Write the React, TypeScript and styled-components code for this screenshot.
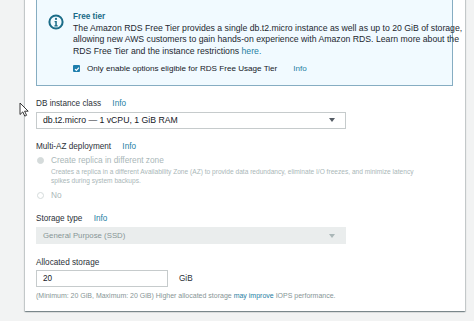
import React from 'react';
import styled, { createGlobalStyle } from 'styled-components';

const GlobalStyle = createGlobalStyle`
  html, body {
    margin: 0;
    padding: 0;
    background: #f2f3f3;
  }
  body {
    font-family: "Liberation Sans", Arial, sans-serif;
    color: #16191f;
    overflow: hidden;
  }
`;

const Page = styled.div`
  position: relative;
  width: 474px;
  height: 321px;
  overflow: hidden;
  padding: 0 9px 0 25px;
  box-sizing: border-box;
`;

const Card = styled.section`
  margin-top: -10px;
  background: #fff;
  box-shadow: 0 1px 1px rgba(0, 28, 36, 0.3), 1px 1px 1px rgba(0, 28, 36, 0.15),
    -1px 1px 1px rgba(0, 28, 36, 0.15);
  padding: 6px 12px 11px 11px;
`;

const InfoBox = styled.div`
  display: flex;
  gap: 9px;
  background: #f1faff;
  border: 1px solid #86adc2;
  padding: 14px 12px 10px 11px;
`;

const InfoIcon = styled.svg`
  flex: none;
  margin-top: 3px;
  width: 16px;
  height: 16px;
`;

const BoxContent = styled.div`
  flex: 1;
`;

const BoxTitle = styled.div`
  font-size: 8.2px;
  line-height: 11.5px;
  font-weight: bold;
  color: #1b6c88;
`;

const BoxText = styled.p`
  margin: 0;
  font-size: 8.7px;
  line-height: 11.5px;
  white-space: nowrap;
  color: #232830;
`;

const Link = styled.a`
  color: #2580a3;
  text-decoration: none;
`;

const CheckRow = styled.label`
  display: flex;
  align-items: center;
  gap: 7px;
  margin-top: 6px;
  font-size: 8.1px;
  line-height: 11.5px;
`;

const CheckBox = styled.span`
  width: 7px;
  height: 7px;
  border-radius: 1px;
  background: #1d7ead;
  display: flex;
  align-items: center;
  justify-content: center;
`;

const InfoLink = styled(Link)`
  margin-left: 9px;
`;

const Field = styled.div<{ $gap?: number }>`
  margin-top: ${(p) => p.$gap ?? 12.5}px;
`;

const Label = styled.div<{ $below?: number }>`
  font-size: 8.2px;
  line-height: 11px;
  color: #2b3038;
  margin-bottom: ${(p) => p.$below ?? 2.5}px;
`;

const Select = styled.div<{ $disabled?: boolean }>`
  width: 310px;
  height: 17px;
  box-sizing: border-box;
  display: flex;
  align-items: center;
  justify-content: space-between;
  padding: 0 10px 0 6px;
  font-size: ${(p) => (p.$disabled ? 7.8 : 8.7)}px;
  color: ${(p) => (p.$disabled ? '#879596' : '#16191f')};
  background: ${(p) => (p.$disabled ? '#eaeded' : '#fff')};
  border: 1px solid ${(p) => (p.$disabled ? '#eaeded' : '#c6cbcc')};
`;

const Caret = styled.span<{ $disabled?: boolean }>`
  width: 0;
  height: 0;
  border-left: 3px solid transparent;
  border-right: 3px solid transparent;
  border-top: 4px solid ${(p) => (p.$disabled ? '#aab7b8' : '#545b64')};
`;

const RadioRow = styled.div<{ $gap: number }>`
  display: flex;
  align-items: center;
  gap: 7px;
  margin-top: ${(p) => p.$gap}px;
  padding-left: 1px;
  font-size: 8.3px;
  line-height: 11px;
  color: #aab7b8;
`;

const Radio = styled.span<{ $checked?: boolean }>`
  width: 7px;
  height: 7px;
  border-radius: 50%;
  box-sizing: border-box;
  border: 1.5px solid #d5dbdb;
  background: ${(p) => (p.$checked ? '#d5dbdb' : '#fff')};
`;

const RadioDesc = styled.div`
  margin: 1px 0 0 15px;
  font-size: 6.6px;
  line-height: 9px;
  color: #aab7b8;
  white-space: nowrap;
`;

const InputRow = styled.div`
  display: flex;
  align-items: center;
  gap: 11px;
  font-size: 8.2px;
`;

const TextInput = styled.div`
  width: 132px;
  height: 17px;
  box-sizing: border-box;
  display: flex;
  align-items: center;
  padding-left: 6px;
  border: 1px solid #c6cbcc;
  font-size: 8.2px;
`;

const Unit = styled.span`
  color: #2b3038;
`;

const Hint = styled.div`
  margin-top: 3.5px;
  font-size: 7px;
  line-height: 9px;
  color: #879596;
  white-space: nowrap;
`;

const Cursor = styled.svg`
  position: absolute;
  left: 19px;
  top: 102px;
  width: 10px;
  height: 15px;
`;

const App: React.FC = () => {
  return (
    <>
      <GlobalStyle />
      <Page>
        <Card>
          <InfoBox>
            <InfoIcon viewBox="0 0 16 16">
              <circle cx="8" cy="8" r="6.6" fill="none" stroke="#1b6c88" strokeWidth="2" />
              <circle cx="8" cy="4.9" r="1.1" fill="#1b6c88" />
              <path d="M6.6 7h2.2v4.2h0.9v1.2H6.4v-1.2h0.9V8.2h-0.7z" fill="#1b6c88" />
            </InfoIcon>
            <BoxContent>
              <BoxTitle>Free tier</BoxTitle>
              <BoxText>
                The Amazon RDS Free Tier provides a single db.t2.micro instance as well as up to 20 GiB of storage,
                <br />
                allowing new AWS customers to gain hands-on experience with Amazon RDS. Learn more about the
                <br />
                RDS Free Tier and the instance restrictions <Link href="#">here.</Link>
              </BoxText>
              <CheckRow>
                <CheckBox>
                  <svg width="6" height="6" viewBox="0 0 6 6">
                    <path d="M1 3.1l1.4 1.4L5 1.6" fill="none" stroke="#fff" strokeWidth="1.2" />
                  </svg>
                </CheckBox>
                Only enable options eligible for RDS Free Usage Tier
                <InfoLink href="#">Info</InfoLink>
              </CheckRow>
            </BoxContent>
          </InfoBox>

          <Field>
            <Label>
              DB instance class <InfoLink href="#">Info</InfoLink>
            </Label>
            <Select>
              db.t2.micro — 1 vCPU, 1 GiB RAM
              <Caret />
            </Select>
          </Field>

          <Field>
            <Label $below={0}>
              Multi-AZ deployment <InfoLink href="#">Info</InfoLink>
            </Label>
            <RadioRow $gap={3}>
              <Radio $checked />
              Create replica in different zone
            </RadioRow>
            <RadioDesc>
              Creates a replica in a different Availability Zone (AZ) to provide data redundancy, eliminate I/O freezes, and minimize latency
              <br />
              spikes during system backups.
            </RadioDesc>
            <RadioRow $gap={5}>
              <Radio />
              No
            </RadioRow>
          </Field>

          <Field $gap={12}>
            <Label $below={3}>
              Storage type <InfoLink href="#">Info</InfoLink>
            </Label>
            <Select $disabled>
              General Purpose (SSD)
              <Caret $disabled />
            </Select>
          </Field>

          <Field>
            <Label>Allocated storage</Label>
            <InputRow>
              <TextInput>20</TextInput>
              <Unit>GiB</Unit>
            </InputRow>
            <Hint>
              (Minimum: 20 GiB, Maximum: 20 GiB) Higher allocated storage <Link href="#">may improve</Link> IOPS performance.
            </Hint>
          </Field>
        </Card>
        <Cursor viewBox="0 0 10 15">
          <path d="M1 1v11.5l2.8-2.6 2 4.2 1.8-.8-2-4.1H9.2z" fill="#fff" stroke="#222" strokeWidth="0.9" strokeLinejoin="round" />
        </Cursor>
      </Page>
    </>
  );
};

export default App;
